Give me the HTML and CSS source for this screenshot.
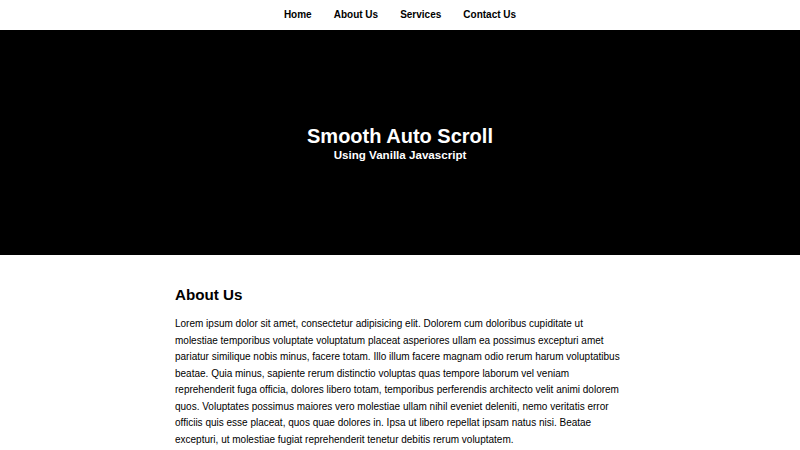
FILE: index.html
```html
<!DOCTYPE html>
<html>
<head>
<meta charset="utf-8">
<link rel="stylesheet" href="styles.css">
</head>
<body>
<nav class="nav">
  <a href="#home">Home</a>
  <a href="#about">About Us</a>
  <a href="#services">Services</a>
  <a href="#contact">Contact Us</a>
</nav>
<header class="hero">
  <h1 class="hero-title">Smooth Auto Scroll</h1>
  <p class="hero-sub">Using Vanilla Javascript</p>
</header>
<section class="section">
  <h2 class="section-title">About Us</h2>
  <p class="section-text">Lorem ipsum dolor sit amet, consectetur adipisicing elit. Dolorem cum doloribus cupiditate ut molestiae temporibus voluptate voluptatum placeat asperiores ullam ea possimus excepturi amet pariatur similique nobis minus, facere totam. Illo illum facere magnam odio rerum harum voluptatibus beatae. Quia minus, sapiente rerum distinctio voluptas quas tempore laborum vel veniam reprehenderit fuga officia, dolores libero totam, temporibus perferendis architecto velit animi dolorem quos. Voluptates possimus maiores vero molestiae ullam nihil eveniet deleniti, nemo veritatis error officiis quis esse placeat, quos quae dolores in. Ipsa ut libero repellat ipsam natus nisi. Beatae excepturi, ut molestiae fugiat reprehenderit tenetur debitis rerum voluptatem.</p>
</section>
</body>
</html>
```
FILE: styles.css
```css
* { box-sizing: border-box; }
html, body { margin: 0; padding: 0; }
body {
  font-family: "Liberation Sans", Arial, sans-serif;
  color: #000;
  background: #fff;
}
.nav {
  height: 30px;
  padding-bottom: 2px;
  display: flex;
  justify-content: center;
  align-items: center;
  gap: 22px;
}
.nav a {
  color: #000;
  text-decoration: none;
  font-weight: bold;
  font-size: 10px;
}
.hero {
  height: 225px;
  background: #000;
  color: #fff;
  display: flex;
  flex-direction: column;
  justify-content: center;
  align-items: center;
  text-align: center;
}
.hero-title {
  margin: 0 0 1px;
  font-size: 20px;
  line-height: 1.1;
  font-weight: bold;
}
.hero-sub {
  margin: 0;
  font-size: 11.6px;
  font-weight: bold;
}
.section {
  width: 450px;
  margin: 0 auto;
  padding-top: 31px;
}
.section-title {
  margin: 0 0 13px;
  font-size: 15.2px;
  font-weight: bold;
}
.section-text {
  margin: 0;
  font-size: 10px;
  line-height: 16.5px;
}
```
